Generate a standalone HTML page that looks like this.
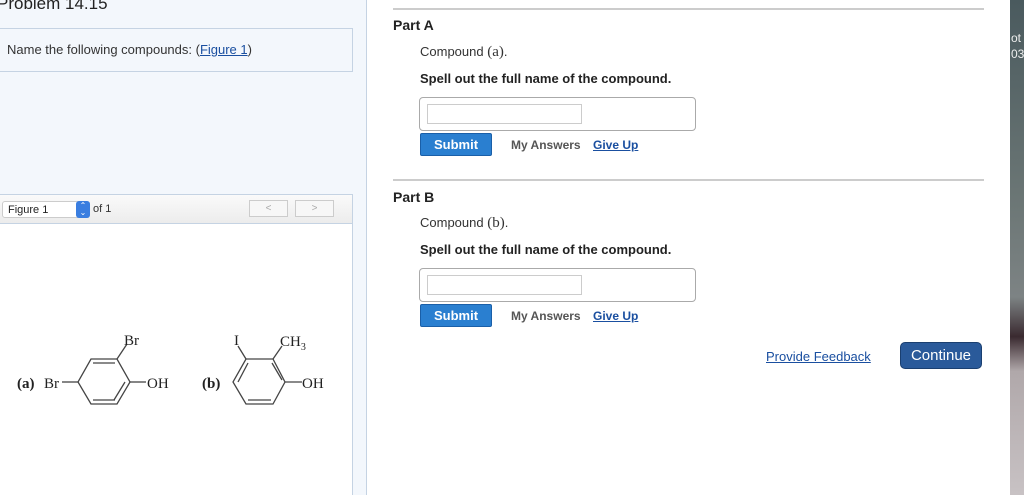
<!DOCTYPE html>
<html><head><meta charset="utf-8"><style>
*{margin:0;padding:0;box-sizing:border-box}
html,body{width:1024px;height:495px;overflow:hidden}
body{position:relative;font-family:"Liberation Sans",Arial,sans-serif;background:#fff}
.left{position:absolute;left:0;top:0;width:367px;height:495px;background:#f3f7fc;border-right:1px solid #c5d3e3;overflow:hidden}
.t{position:absolute;left:-3px;top:-6px;font-size:17px;color:#222}
.q{position:absolute;left:0;top:28px;width:353px;height:44px;border:1px solid #c5d3e3;border-left:none;background:#f3f7fc;font-size:13px;color:#333;padding:13px 7px}
a{color:#1a4fa0;text-decoration:underline}
.fig{position:absolute;left:0;top:194px;width:353px;height:301px;background:#fff;border:1px solid #c5d3e3;border-left:none;border-bottom:none}
.fh{height:29px;background:linear-gradient(#fafafa,#ececec);border-bottom:1px solid #c5d3e3;position:relative}
.sel{position:absolute;left:2px;top:6px;width:88px;height:17px;background:#fff;border:1px solid #ccc;border-radius:3px;font-size:11px;padding:2px 5px;color:#222}
.sel i{position:absolute;right:-1px;top:-1px;width:14px;height:17px;background:#3a7ee0;border-radius:3px;color:#fff;font-style:normal;font-size:8px;line-height:7px;text-align:center;padding-top:1px}
.of{position:absolute;left:93px;top:8px;font-size:11px;color:#333}
.nb{position:absolute;top:5px;width:39px;height:17px;border:1px solid #ccc;background:#f7f7f7;font-size:10px;color:#aaa;text-align:center;line-height:15px}
.right{position:absolute;left:367px;top:0;width:643px;height:495px;background:#fff}
.strip{position:absolute;left:1010px;top:0;width:14px;height:495px;background:linear-gradient(#4a5a5e,#6b7675 40%,#7d8384 60%,#3a2a30 68%,#b0a8aa 75%,#c8c2c4)}
hr{position:absolute;left:393px;width:591px;border:none;border-top:2px solid #ccc}
.pt{position:absolute;left:393px;font-size:14px;font-weight:bold;color:#222}
.c{position:absolute;left:420px;font-size:13px;color:#333}
.c span{font-family:"Liberation Serif",serif;font-size:15px}
.sp{position:absolute;left:420px;font-size:13px;font-weight:bold;color:#222}
.box{position:absolute;left:419px;width:277px;height:34px;border:1px solid #aaa;border-radius:4px}
.box i{position:absolute;left:7px;top:6px;width:155px;height:20px;border:1px solid #ccc}
.sub{position:absolute;left:420px;width:72px;height:23px;background:#2a7fd0;border:1px solid #1a5fa8;border-radius:2px;color:#fff;font-weight:bold;font-size:13px;text-align:center;line-height:21px}
.ma{position:absolute;left:511px;font-size:12px;font-weight:bold;color:#555}
.gu{position:absolute;left:593px;font-size:12px;font-weight:bold;color:#1a4fa0;text-decoration:underline}
</style></head><body>
<div class="left">
<div class="t">Problem 14.15</div>
<div class="q">Name the following compounds: (<a>Figure 1</a>)</div>
<div class="fig">
<div class="fh"><div class="sel">Figure 1<i>&#8963;<br>&#8964;</i></div><div class="of">of 1</div>
<div class="nb" style="left:249px">&lt;</div><div class="nb" style="left:295px">&gt;</div></div>
<svg width="353" height="272" style="position:absolute;left:0;top:29px" font-family="Liberation Serif,serif" font-size="15" fill="#222">
<g stroke="#444" stroke-width="1.3" fill="none" transform="translate(0,-223)">
<polygon points="91,358 117,358 130,381 117,403 91,403 78,381"/>
<line x1="93" y1="362" x2="115" y2="362"/><line x1="125" y1="381" x2="114" y2="399"/><line x1="93" y1="399" x2="115" y2="399"/>
<line x1="117" y1="358" x2="127" y2="343"/><line x1="62" y1="381" x2="78" y2="381"/><line x1="130" y1="381" x2="146" y2="381"/>
<polygon points="246,358 273,358 285,381 273,403 246,403 233,381"/>
<line x1="272" y1="362" x2="282" y2="379"/><line x1="238" y1="381" x2="248" y2="362"/><line x1="248" y1="399" x2="271" y2="399"/>
<line x1="246" y1="358" x2="238" y2="345"/><line x1="273" y1="358" x2="282" y2="345"/><line x1="285" y1="381" x2="302" y2="381"/>
</g>
<g transform="translate(0,-223)">
<text x="124" y="344">Br</text><text x="17" y="387" font-weight="bold">(a)</text><text x="44" y="387">Br</text><text x="147" y="387">OH</text>
<text x="202" y="387" font-weight="bold">(b)</text><text x="234" y="344">I</text><text x="280" y="345">CH<tspan font-size="10" dy="4">3</tspan></text><text x="302" y="387">OH</text>
</g></svg>
</div>
</div>
<div class="right"></div>
<hr style="top:8px">
<div class="pt" style="top:17px">Part A</div>
<div class="c" style="top:44px">Compound <span>(a)</span>.</div>
<div class="sp" style="top:71px">Spell out the full name of the compound.</div>
<div class="box" style="top:97px"><i></i></div>
<div class="sub" style="top:133px">Submit</div>
<div class="ma" style="top:138px">My Answers</div><div class="gu" style="top:138px">Give Up</div>
<hr style="top:179px">
<div class="pt" style="top:189px">Part B</div>
<div class="c" style="top:215px">Compound <span>(b)</span>.</div>
<div class="sp" style="top:242px">Spell out the full name of the compound.</div>
<div class="box" style="top:268px"><i></i></div>
<div class="sub" style="top:304px">Submit</div>
<div class="ma" style="top:309px">My Answers</div><div class="gu" style="top:309px">Give Up</div>
<div style="position:absolute;left:766px;top:349px;font-size:13px;color:#1a4fa0;text-decoration:underline">Provide Feedback</div>
<div style="position:absolute;left:900px;top:342px;width:82px;height:27px;background:#2a5a9a;border:1px solid #1a3f70;border-radius:5px;color:#fff;font-size:15px;text-align:center;line-height:25px">Continue</div>
<div class="strip"></div>
<div style="position:absolute;left:1011px;top:30px;font-size:12px;color:#eee;line-height:16px">ot<br>03</div>
</body></html>
